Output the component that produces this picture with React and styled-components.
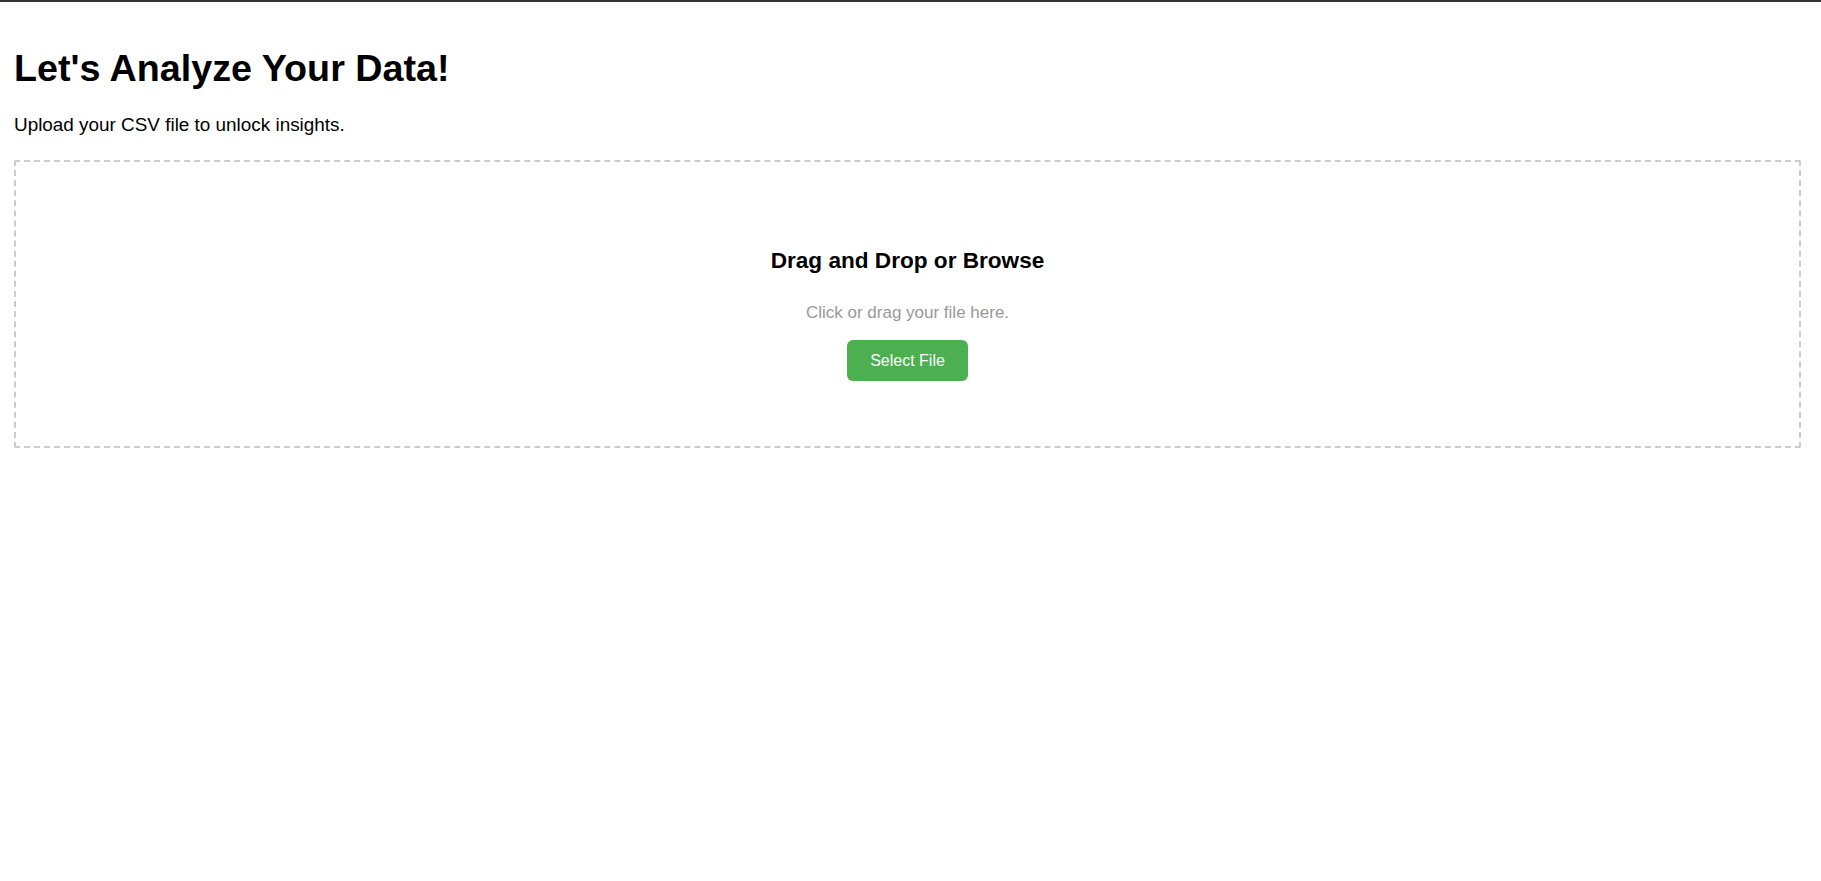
import React from 'react'
import styled, { createGlobalStyle } from 'styled-components'

const GlobalStyle = createGlobalStyle`
    html, body {
        margin: 0;
        padding: 0;
        background: #ffffff;
    }
    body {
        font-family: "Liberation Sans", Arial, sans-serif;
        color: #000;
        border-top: 2px solid #333333;
    }
`;

const Page = styled.main`
    padding: 45px 20px 40px 14px;
`;

const Title = styled.h1`
    margin: 0;
    font-size: 37.7px;
    line-height: 43px;
    font-weight: 700;
`;

const Subtitle = styled.p`
    margin: 24px 0 0;
    font-size: 18.9px;
    line-height: 21px;
`;

const DropZone = styled.div`
    margin-top: 25px;
    height: 288px;
    box-sizing: border-box;
    border: 2px dashed #cccccc;
    border-radius: 2px;
    padding-top: 86px;
    display: flex;
    flex-direction: column;
    align-items: center;
    text-align: center;
    cursor: pointer;
`;

const ZoneTitle = styled.h3`
    margin: 0;
    font-size: 22.6px;
    line-height: 25px;
    font-weight: 700;
`;

const Hint = styled.p`
    margin: 30px 0 0;
    font-size: 17px;
    line-height: 19px;
    color: #999999;
`;

const SelectButton = styled.button`
    margin-top: 18px;
    width: 121px;
    height: 41px;
    border: 0;
    border-radius: 6px;
    background: #4caf50;
    color: #ffffff;
    font-family: "Liberation Sans", Arial, sans-serif;
    font-size: 16px;
    cursor: pointer;

    &:hover {
        background: #45a049;
    }
`;

const App = () => {
    return (
        <>
            <GlobalStyle />
            <Page>
                <Title>Let's Analyze Your Data!</Title>
                <Subtitle>Upload your CSV file to unlock insights.</Subtitle>
                <DropZone>
                    <ZoneTitle>Drag and Drop or Browse</ZoneTitle>
                    <Hint>Click or drag your file here.</Hint>
                    <SelectButton type="button">Select File</SelectButton>
                </DropZone>
            </Page>
        </>
    )
}

export default App
